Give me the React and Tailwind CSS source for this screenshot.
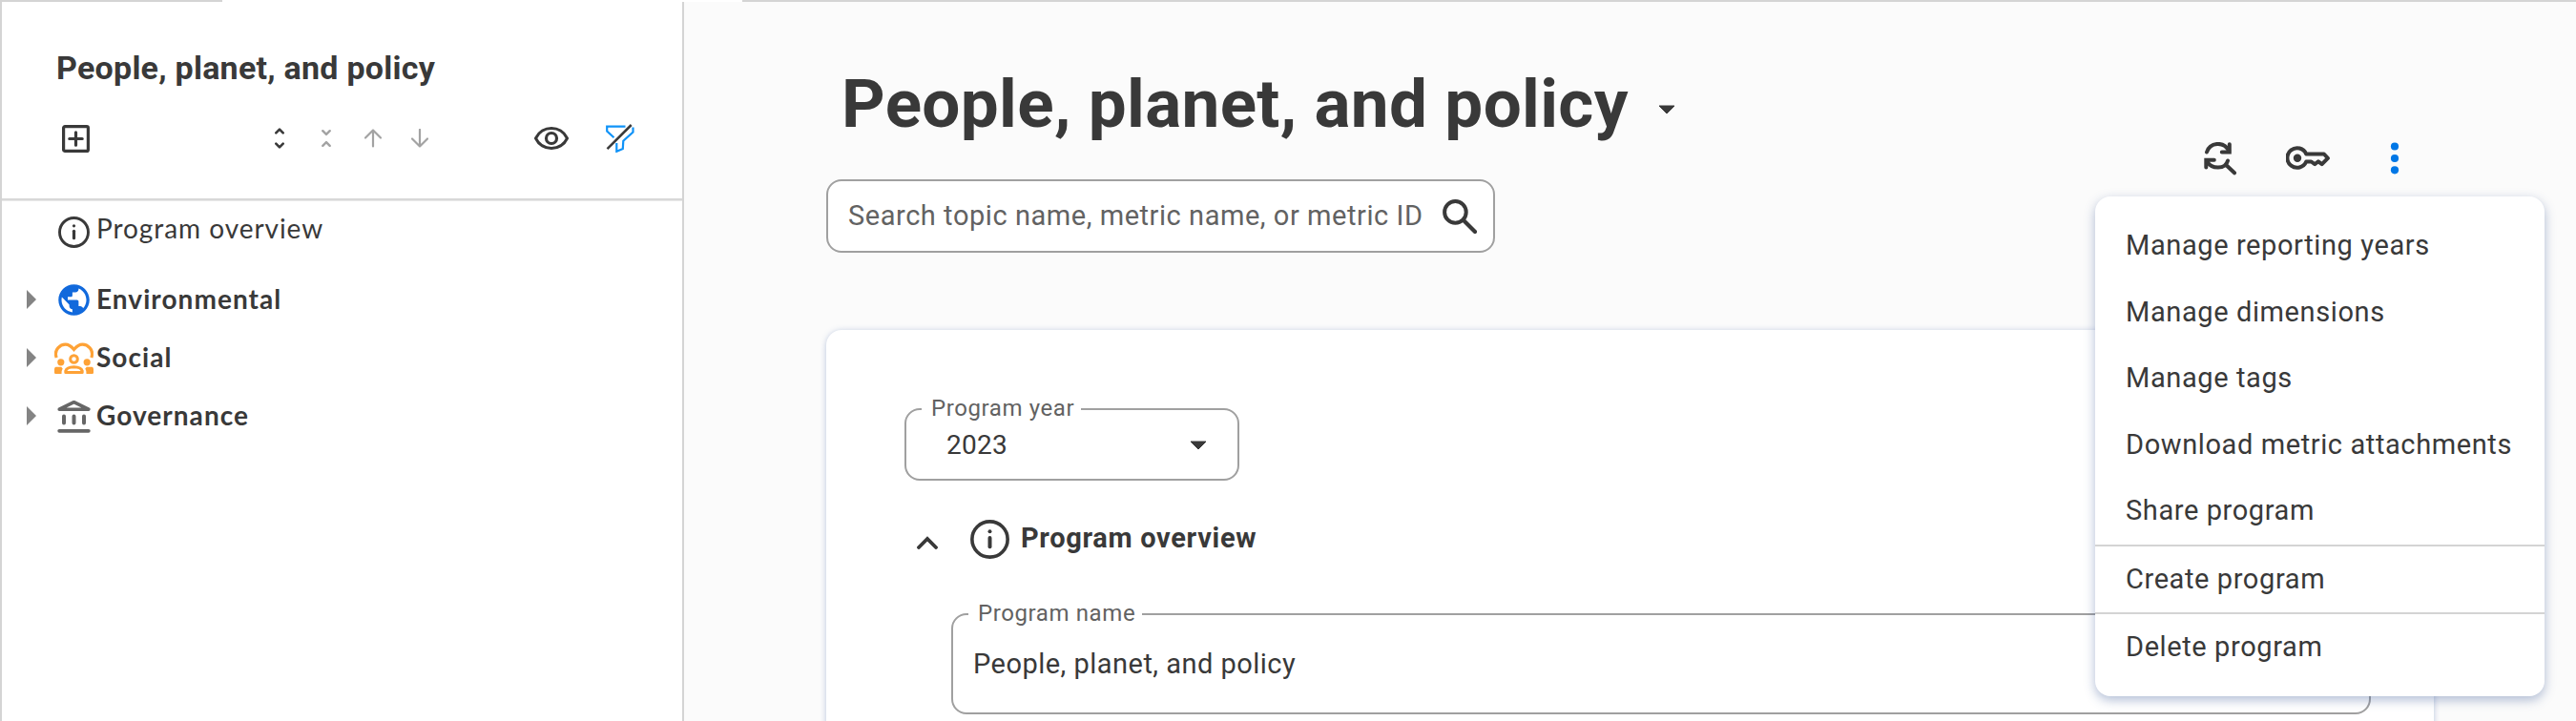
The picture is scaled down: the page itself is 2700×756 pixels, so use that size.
import { MdPublic } from 'react-icons/md'

const topics = [
  { name: 'Environmental', icon: <MdPublic className="size-[39px] text-[#1169dc]" /> },
  { name: 'Social', icon: <SocialIcon /> },
  { name: 'Governance', icon: <GovernanceIcon /> },
]

const menu = [
  ['Manage reporting years', 'Manage dimensions', 'Manage tags', 'Download metric attachments', 'Share program'],
  ['Create program'],
  ['Delete program'],
]

function InfoIcon({ className }) {
  return (
    <svg viewBox="0 0 33 33" className={className} fill="none" stroke="currentColor">
      <circle cx="16.5" cy="16.5" r="15" strokeWidth="2.9" />
      <circle cx="16.5" cy="9.8" r="1.6" fill="currentColor" stroke="none" />
      <path d="M16.5 15.3v7.4" strokeWidth="3.2" strokeLinecap="round" />
    </svg>
  )
}

function Caret({ className }) {
  return (
    <svg viewBox="0 0 18 10" className={className}>
      <path d="M1 1h16L9 9z" fill="currentColor" stroke="currentColor" strokeLinejoin="round" />
    </svg>
  )
}

function SocialIcon() {
  return (
    <svg viewBox="0 0 41 33" className="w-[41px] h-[33px] text-[#fea236]" fill="none" stroke="currentColor">
      <path d="M2.2 16C-1 7.5 6.5 2.2 11.5 2.2c4 0 6.5 2.300 9 5.300 2.500-3 5-5.300 9-5.300C34.500 2.200 42 7.500 38.800 16" strokeWidth="3.200" />
      <circle cx="20.500" cy="17.500" r="3.800" strokeWidth="3" />
      <g fill="currentColor" stroke="none">
        <circle cx="6.800" cy="20.800" r="3.600" />
        <circle cx="34.200" cy="20.800" r="3.600" />
        <path d="M1.500 25.800h5.700L8.700 27.600Q7.400 29.500 7.500 33H1.200Q0 33 0 31.500V28Q0 26 1.500 25.800zM39.500 25.800h-5.700L32.300 27.600Q33.600 29.500 33.500 33h6.300Q41 33 41 31.500V28Q41 26 39.500 25.800z" />
      </g>
      <path d="M11.800 31.400v-1.400q1.200-4.200 8.700-4.300 7.500.1 8.700 4.300v1.400z" strokeWidth="3" strokeLinejoin="round" />
    </svg>
  )
}

function GovernanceIcon() {
  return (
    <svg viewBox="0 0 35 35" className="size-[35px] text-[#666]" fill="none" stroke="currentColor" strokeLinecap="round" strokeLinejoin="round">
      <path d="M2.200 10.200 17.500 2.700l15.300 7.500z" strokeWidth="3.600" />
      <path d="M7 17.500v7M17.500 17.500v7M28 17.500v7" strokeWidth="4" />
      <path d="M2.200 32.800h30.600" strokeWidth="3.800" />
    </svg>
  )
}

function Toolbar() {
  return (
    <div className="flex items-center h-[34px] ml-[63px] text-[#393939]">
      <svg viewBox="0 0 29 29" className="size-[29px]" fill="none" stroke="currentColor" strokeWidth="3.200">
        <rect x="1.600" y="1.600" width="25.800" height="25.800" rx="1.500" />
        <path d="M14.500 7.800v13.400M7.800 14.500h13.400" strokeLinecap="round" />
      </svg>
      <svg viewBox="0 0 10 22" className="w-[10px] h-[22px] ml-[194px]" fill="none" stroke="currentColor" strokeWidth="2.600" strokeLinecap="round" strokeLinejoin="round">
        <path d="M1.300 5.300 5 1.600l3.700 3.700M1.300 16.700 5 20.400l3.700-3.700" />
      </svg>
      <svg viewBox="0 0 10 18" className="w-[10px] h-[18px] ml-[39px] text-[#a3a3a3]" fill="none" stroke="currentColor" strokeWidth="2.400" strokeLinecap="round" strokeLinejoin="round">
        <path d="M1.300 1.200 5 4.900l3.700-3.700M1.300 16.800 5 13.100l3.700 3.700" />
      </svg>
      <svg viewBox="0 0 18 20" className="w-[18px] h-[20px] ml-[35px] text-[#a3a3a3]" fill="none" stroke="currentColor" strokeWidth="2.200" strokeLinecap="round" strokeLinejoin="round">
        <path d="M9 18.500V1.500M1 9.500l8-8 8 8" />
      </svg>
      <svg viewBox="0 0 18 20" className="w-[18px] h-[20px] ml-[31px] text-[#a3a3a3]" fill="none" stroke="currentColor" strokeWidth="2.200" strokeLinecap="round" strokeLinejoin="round">
        <path d="M9 1v17.500M1 10.500l8 8 8-8" />
      </svg>
      <svg viewBox="0 0 36 24" className="w-[36px] h-[24px] ml-[111px]" fill="none" stroke="currentColor" strokeWidth="3" strokeLinejoin="round">
        <path d="M1.500 12C8-2 28-2 34.500 12 28 26 8 26 1.500 12z" />
        <circle cx="18" cy="12" r="5.500" strokeWidth="3.200" />
      </svg>
      <svg viewBox="0 0 30 30" className="size-[30px] ml-[39px]" fill="none" strokeWidth="2.200">
        <path d="M20.500 2.600H1.200v4.900l7.300 6.800M28.500 3.500v5L18.300 17.700l-.5 8.300-6.500 2.800V20" stroke="#1093f8" />
        <path d="M1.500 26.200 26.700 1" stroke="#393939" strokeWidth="2.500" />
      </svg>
    </div>
  )
}

function Sidebar() {
  return (
    <aside className="w-[717px] shrink-0 bg-white border-x-2 border-[#d4d4d4]">
      <div className="h-[208px] pt-12 border-b-2 border-[#d8d8d8] shadow-[0_1px_0_#e8e8e8]">
        <h2 className="ml-[57px] h-[42px] leading-[42px] text-[34px] font-bold tracking-[0.25px]">People, planet, and policy</h2>
        <div className="mt-9"><Toolbar /></div>
      </div>
      <div className="pt-[3px] text-[28px] font-['Lato',sans-serif] tracking-[1.05px]">
        <div className="flex items-center h-14 pl-[59px]">
          <InfoIcon className="size-[33px] mt-1" />
          <span className="ml-[7px] pb-1 tracking-[0.95px]">Program overview</span>
        </div>
        <div className="mt-[15px]">
          {topics.map(t => (
            <div key={t.name} className="flex items-center h-[61px] pl-[26px]">
              <svg viewBox="0 0 10 20" className="w-[10px] h-5 mb-[2px] text-[#848484]"><path d="M0 0v20l10-10z" fill="currentColor" /></svg>
              <span className="flex justify-center w-[41px] ml-[19px]">{t.icon}</span>
              <span className="ml-[3px] pb-[3px] font-bold">{t.name}</span>
            </div>
          ))}
        </div>
      </div>
    </aside>
  )
}

function Header() {
  return (
    <div className="flex justify-between w-[1685px]">
      <div>
        <div className="flex items-center h-[88px] pl-4">
          <h1 className="text-[71px] leading-[88px] font-bold tracking-[0.35px] whitespace-nowrap">People, planet, and policy</h1>
          <Caret className="w-[18px] h-[10px] ml-[31px] mt-3" />
        </div>
        <div className="flex items-center justify-between w-[701px] h-[77px] mt-[35px] pl-[21px] pr-[17px] bg-white border-2 border-[#a0a0a0] rounded-2xl">
          <span className="text-[29px] tracking-[0.55px] text-[#626262] whitespace-nowrap">Search topic name, metric name, or metric ID</span>
          <svg viewBox="0 0 36 36" className="size-9 shrink-0" fill="none" stroke="currentColor" strokeLinecap="round">
            <circle cx="13.400" cy="13.400" r="11.300" strokeWidth="4" />
            <path d="m22 22 12 12" strokeWidth="4.200" />
          </svg>
        </div>
      </div>
      <div className="flex items-center h-12 mt-[77px] pr-[33px]">
        <svg viewBox="0 0 35 35" className="size-[35px]" fill="none" stroke="currentColor" strokeWidth="4" strokeLinecap="round" strokeLinejoin="round">
          <path d="M3 10.500C6.500-.3 21-1 26.200 9" />
          <path d="M26.800 2.300v8.200h-8M2.300 26.500V18.800h8.500" strokeLinejoin="miter" />
          <path d="M3.500 20.500C8 28.500 22.500 29 25 19.500M23.800 24.500l8.200 7.800" />
        </svg>
        <svg viewBox="0 0 46 26" className="w-[46px] h-[26px] ml-[51px]" fill="none" stroke="currentColor" strokeWidth="4" strokeLinejoin="round">
          <path d="M21.200 8.500A10.300 10.300 0 1 0 21.200 16.500H26.500l3.700 2.700 3.700-2.900 3.800 2.900 6.200-6.400-4-4.300z" />
          <circle cx="12" cy="12.700" r="4.200" fill="currentColor" stroke="none" />
        </svg>
        <svg viewBox="0 0 8 34" className="w-2 h-[34px] ml-16 mr-1 overflow-visible" fill="#0077e6">
          <circle cx="4" cy="4.500" r="4.100" />
          <circle cx="4" cy="17" r="4.100" />
          <circle cx="4" cy="29.300" r="4.100" />
        </svg>
      </div>
    </div>
  )
}

function Field({ label, className, children }) {
  return (
    <fieldset className={'px-4 border-2 border-[#a0a0a0] rounded-2xl ' + className}>
      <legend className="h-6 pl-[10px] pr-[7px] text-2xl leading-[22px] tracking-[0.6px] text-[#626262]">{label}</legend>
      {children}
    </fieldset>
  )
}

function Card() {
  return (
    <div className="w-[1685px] h-[480px] mt-[81px] pt-[71px] pl-[82px] bg-white rounded-2xl shadow-[0_1px_6px_rgba(90,120,180,0.4)]">
      <Field label="Program year" className="w-[351px] h-[87px]">
        <div className="flex items-center justify-between h-[51px] pl-[26px] pr-[16px]">
          <span className="text-[28px] tracking-[0.3px]">2023</span>
          <Caret className="w-[18px] h-[10px]" />
        </div>
      </Field>
      <div className="flex items-center h-10 mt-[41px] pl-[13px]">
        <svg viewBox="0 0 22 14" className="w-[22px] h-[14px] mt-[7px]" fill="none" stroke="currentColor" strokeWidth="3.800" strokeLinecap="round"><path d="m2 12 9-9 9 9" /></svg>
        <InfoIcon className="size-[41px] ml-[34px]" />
        <span className="ml-[12px] text-[29px] font-bold tracking-[0.68px]">Program overview</span>
      </div>
      <Field label="Program name" className="w-[1488px] h-[117px] ml-[49px] mt-[47px]">
        <div className="flex items-center h-[81px] pl-[5px] text-[29px] tracking-[0.48px]">People, planet, and policy</div>
      </Field>
    </div>
  )
}

export default function App() {
  return (
    <div className="relative flex flex-col w-[2700px] h-[756px] overflow-hidden bg-[#fbfbfb] text-[#393939] font-['Roboto',sans-serif]">
      <div className="flex justify-between h-[2px] shrink-0 bg-white">
        <div className="w-[233px] bg-[#d4d4d4]" />
        <div className="w-[1922px] bg-[#d4d4d4]" />
      </div>
      <div className="flex flex-1 min-h-0">
        <Sidebar />
        <main className="flex-1 pt-[63px] pl-[149px]">
          <Header />
          <Card />
        </main>
      </div>

      <div className="absolute left-[2196px] top-[206px] w-[471px] h-[524px] pt-[17px] bg-white rounded-2xl shadow-[0_4px_12px_rgba(60,90,150,0.4)]">
        {menu.map((group, i) => (
          <ul key={i} className={i ? 'border-t-2 border-[#d4d4d4]' : ''}>
            {group.map(item => (
              <li key={item} className="flex items-center h-[69.5px] pl-8 text-[29px] tracking-[0.6px]">{item}</li>
            ))}
          </ul>
        ))}
      </div>
    </div>
  )
}
